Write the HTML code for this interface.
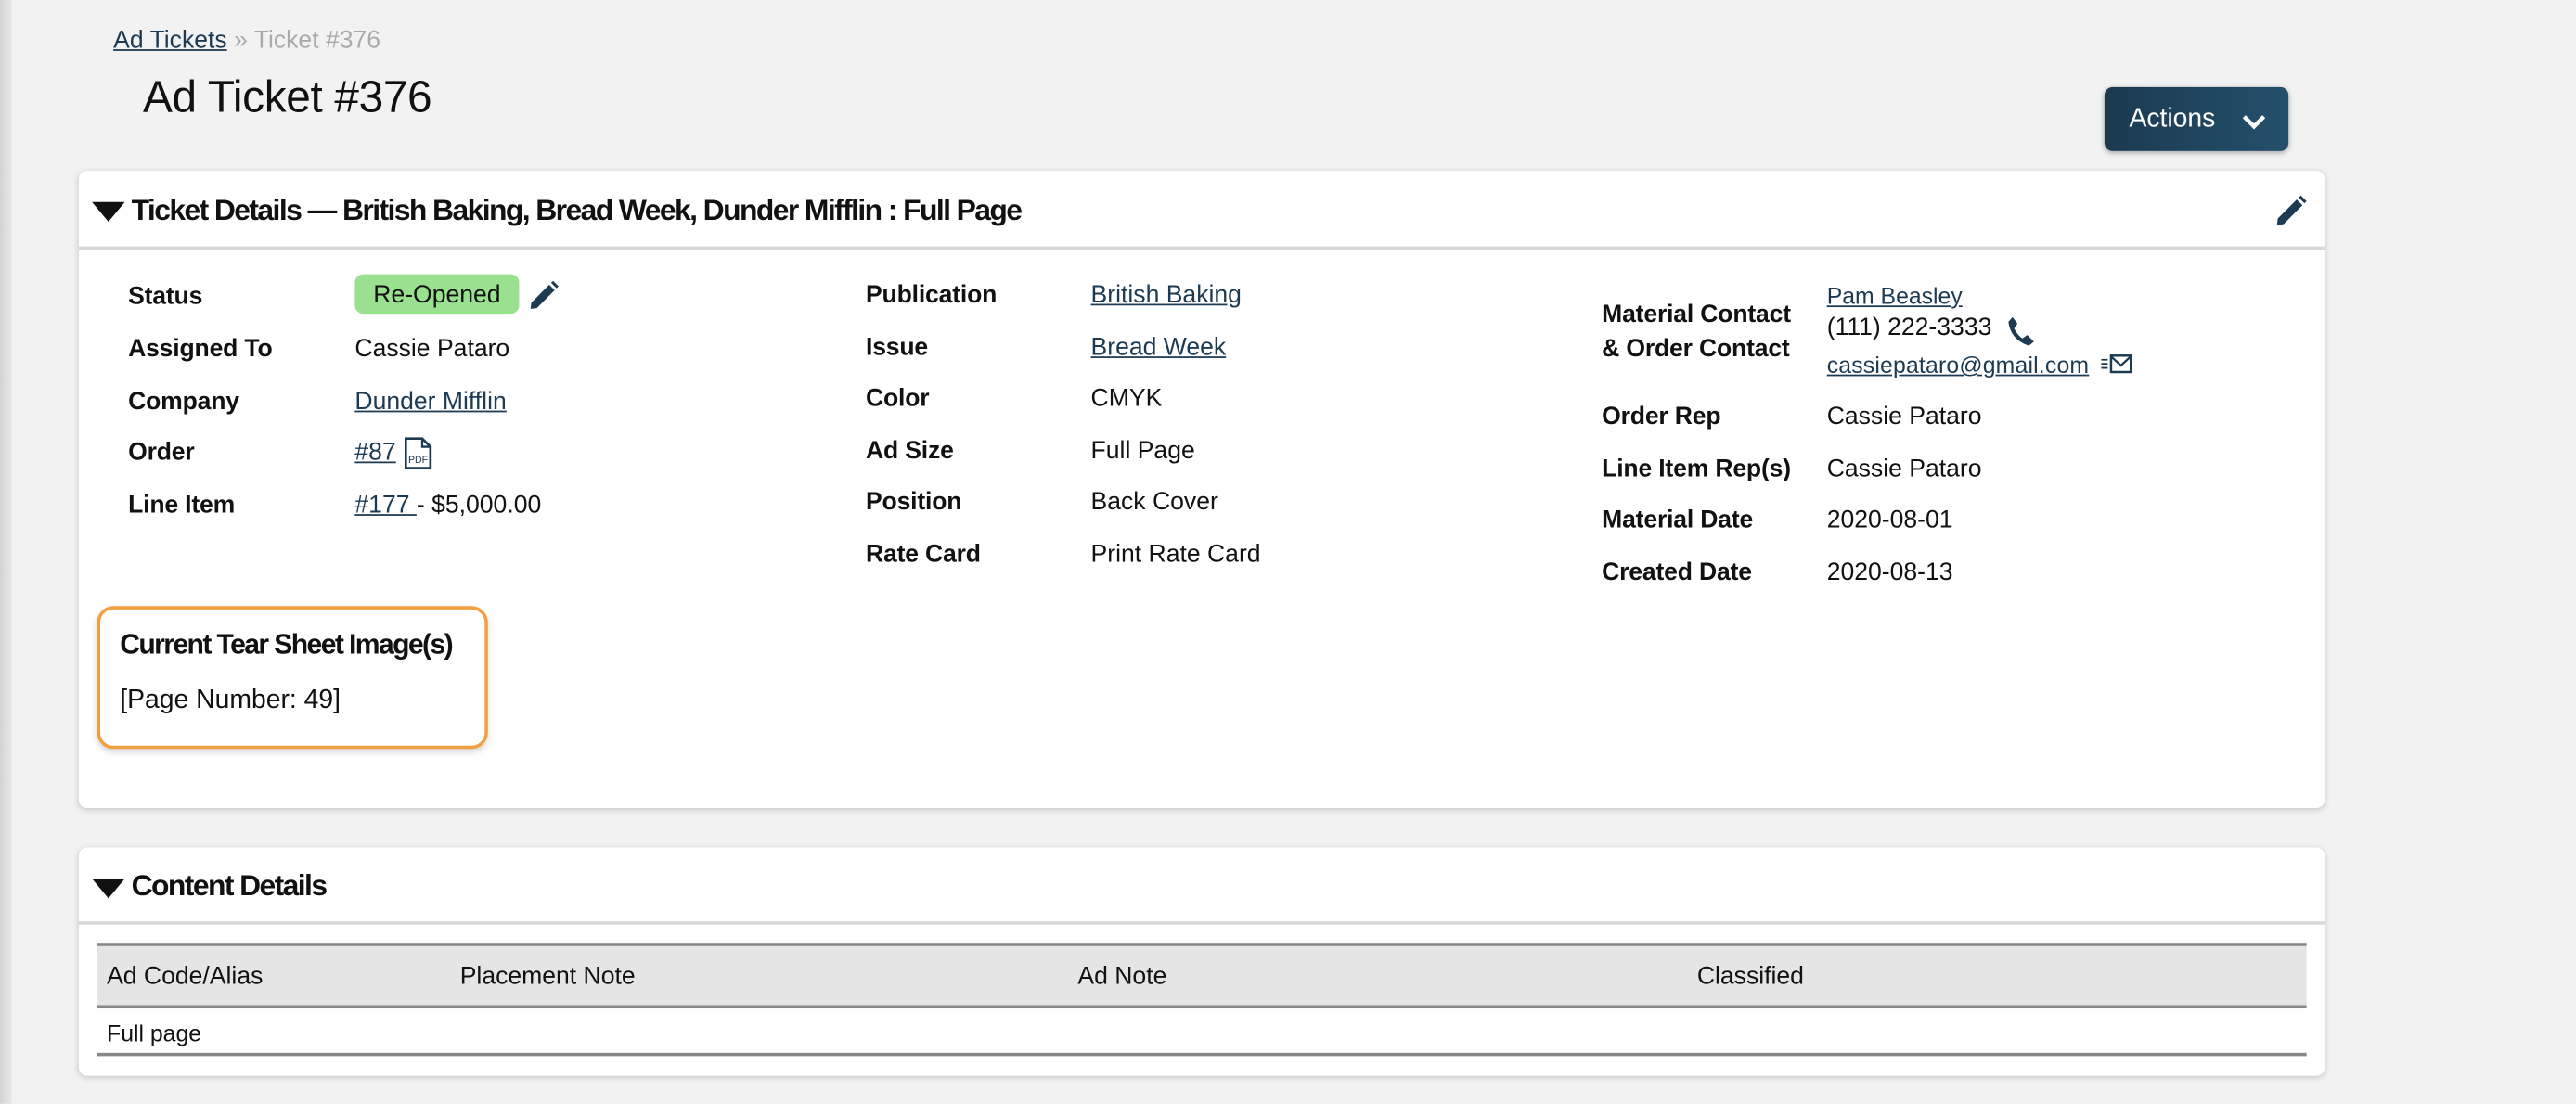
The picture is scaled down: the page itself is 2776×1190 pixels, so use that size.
<!DOCTYPE html>
<html><head><meta charset="utf-8">
<style>
html,body{margin:0;padding:0;}
body{width:2776px;height:1190px;overflow:hidden;background:#f2f2f2;font-family:"Liberation Sans",sans-serif;color:#111;}
#w{position:absolute;left:0;top:0;width:1568px;height:672px;transform:scale(1.77041);transform-origin:0 0;}
.strip{position:absolute;left:0;top:0;width:7px;height:672px;background:linear-gradient(90deg,#d4d4d4,#e8e8e8);}
.a{position:absolute;white-space:nowrap;}
a,.lk{color:#1c3a52;text-decoration:underline;}
.card{position:absolute;left:48px;width:1367px;background:#fff;border-radius:5px;box-shadow:0 1px 4px rgba(0,0,0,.18);}
.hd{position:absolute;left:0;right:0;top:0;border-bottom:2px solid #d8d8d8;}
.tri{position:absolute;left:8px;width:0;height:0;border-left:10px solid transparent;border-right:10px solid transparent;border-top:12px solid #111;}
.ht{font-size:18px;font-weight:bold;letter-spacing:-0.9px;}
.lb{font-size:15px;font-weight:bold;letter-spacing:-0.1px;}
.v{font-size:15px;}
#w .a.t{margin-top:1px;}
</style></head><body>
<div id="w">
<div class="strip"></div>
<div class="a" style="left:69px;top:16px;font-size:15px;"><span class="lk">Ad Tickets</span> <span style="color:#aaa">» Ticket #376</span></div>
<div class="a" style="left:87px;top:44px;font-size:27px;letter-spacing:-0.2px;">Ad Ticket #376</div>
<div class="a" style="left:1281px;top:53px;width:112px;height:39px;border-radius:5px;background:linear-gradient(90deg,#1b3a50,#24506c);box-shadow:0 1px 3px rgba(0,0,0,.3);color:#fff;font-size:16px;">
<span style="position:absolute;left:15px;top:11px;">Actions</span>
<svg style="position:absolute;left:83px;top:15px" width="16" height="12" viewBox="0 0 16 12"><path d="M2 3 L8 9 L14 3" stroke="#fff" stroke-width="2.5" fill="none"/></svg>
</div>

<div class="card" style="top:104px;height:388px;">
 <div class="hd" style="height:46px;"></div>
 <div class="tri" style="top:19px;"></div>
 <div class="a ht" style="left:32px;top:14px;">Ticket Details — British Baking, Bread Week, Dunder Mifflin : Full Page</div>
 <svg class="a" style="left:1337px;top:15px" width="19" height="19" viewBox="0 0 19 19"><path d="M1 18 L1.5 14 L13 2.5 L16.5 6 L5 17.5 Z" fill="#1c3a52"/><path d="M14.2 1.3 L15.5 0 L19 3.5 L17.7 4.8 Z" fill="#1c3a52"/></svg>
</div>
<div class="card" style="top:516px;height:139px;">
 <div class="hd" style="height:45px;"></div>
 <div class="tri" style="top:19px;"></div>
 <div class="a ht" style="left:32px;top:13px;">Content Details</div>
</div>

<!-- col1 -->
<div class="a lb t" style="left:78px;top:171px">Status</div>
<div class="a" style="left:216px;top:167px;width:100px;height:24px;background:#9ae18f;border-radius:5px;font-size:15px;line-height:25px;text-align:center;">Re-Opened</div>
<svg class="a" style="left:322px;top:171px" width="18" height="18" viewBox="0 0 19 19"><path d="M1 18 L1.5 14 L13 2.5 L16.5 6 L5 17.5 Z" fill="#1c3a52"/><path d="M14.2 1.3 L15.5 0 L19 3.5 L17.7 4.8 Z" fill="#1c3a52"/></svg>
<div class="a lb t" style="left:78px;top:203px">Assigned To</div><div class="a v t" style="left:216px;top:203px">Cassie Pataro</div>
<div class="a lb t" style="left:78px;top:235px">Company</div><div class="a v lk t" style="left:216px;top:235px">Dunder Mifflin</div>
<div class="a lb t" style="left:78px;top:266px">Order</div><div class="a v t" style="left:216px;top:266px"><span class="lk">#87 </span></div>
<svg class="a" style="left:246px;top:266px" width="17" height="20" viewBox="0 0 17 20"><path d="M1 1 H11 L16 6 V19 H1 Z" fill="#fff" stroke="#1c3a52" stroke-width="1.5"/><path d="M11 1 V6 H16" fill="none" stroke="#1c3a52" stroke-width="1.3"/><text x="2.5" y="16" font-size="6" font-family="Liberation Sans" fill="#1c3a52">PDF</text></svg>
<div class="a lb t" style="left:78px;top:298px">Line Item</div><div class="a v t" style="left:216px;top:298px"><span class="lk">#177 </span>- $5,000.00</div>
<!-- col2 -->
<div class="a lb t" style="left:527px;top:170px">Publication</div><div class="a v lk t" style="left:664px;top:170px">British Baking</div>
<div class="a lb t" style="left:527px;top:202px">Issue</div><div class="a v lk t" style="left:664px;top:202px">Bread Week</div>
<div class="a lb t" style="left:527px;top:233px">Color</div><div class="a v t" style="left:664px;top:233px">CMYK</div>
<div class="a lb t" style="left:527px;top:265px">Ad Size</div><div class="a v t" style="left:664px;top:265px">Full Page</div>
<div class="a lb t" style="left:527px;top:296px">Position</div><div class="a v t" style="left:664px;top:296px">Back Cover</div>
<div class="a lb t" style="left:527px;top:328px">Rate Card</div><div class="a v t" style="left:664px;top:328px">Print Rate Card</div>
<!-- col3 -->
<div class="a lb" style="left:975px;top:181px;line-height:21px">Material Contact<br>&amp; Order Contact</div>
<div class="a v lk" style="left:1112px;top:172px;font-size:14px">Pam Beasley</div>
<div class="a v" style="left:1112px;top:191px">(111) 222-3333</div>
<svg class="a" style="left:1221px;top:192px" width="18" height="19" viewBox="0 0 18 19"><path d="M4 1 L7 5 L5 8 Q7 12 10 14 L13 12 L17 16 L14 18.5 Q3 15 1.5 4 Z" fill="#1c3a52"/></svg>
<div class="a v lk" style="left:1112px;top:214px;font-size:14px;letter-spacing:0.1px">cassiepataro@gmail.com</div>
<svg class="a" style="left:1279px;top:215px" width="20" height="13" viewBox="0 0 20 13"><path d="M0 4h4M0 6.5h4M0 9h4" stroke="#1c3a52" stroke-width="1"/><rect x="6" y="1.5" width="12" height="10" fill="none" stroke="#1c3a52" stroke-width="1.4"/><path d="M6 2 L12 7.5 L18 2" fill="none" stroke="#1c3a52" stroke-width="1.3"/></svg>
<div class="a lb t" style="left:975px;top:244px">Order Rep</div><div class="a v t" style="left:1112px;top:244px">Cassie Pataro</div>
<div class="a lb t" style="left:975px;top:276px">Line Item Rep(s)</div><div class="a v t" style="left:1112px;top:276px">Cassie Pataro</div>
<div class="a lb t" style="left:975px;top:307px">Material Date</div><div class="a v t" style="left:1112px;top:307px">2020-08-01</div>
<div class="a lb t" style="left:975px;top:339px">Created Date</div><div class="a v t" style="left:1112px;top:339px">2020-08-13</div>

<!-- tear sheet -->
<div class="a" style="left:59px;top:369px;width:234px;height:83px;border:2px solid #f0a040;border-radius:10px;box-shadow:0 2px 4px rgba(0,0,0,.15);background:#fff;"></div>
<div class="a" style="left:73px;top:383px;font-size:17px;font-weight:bold;letter-spacing:-0.9px;">Current Tear Sheet Image(s)</div>
<div class="a" style="left:73px;top:418px;font-size:16px;">[Page Number: 49]</div>

<!-- table -->
<div class="a" style="left:59px;top:574px;width:1345px;height:36px;background:#e5e5e5;border-top:2px solid #888;border-bottom:2px solid #888;"></div>
<div class="a v" style="left:65px;top:586px">Ad Code/Alias</div>
<div class="a v" style="left:280px;top:586px">Placement Note</div>
<div class="a v" style="left:656px;top:586px">Ad Note</div>
<div class="a v" style="left:1033px;top:586px">Classified</div>
<div class="a" style="left:65px;top:621px;font-size:14px">Full page</div>
<div class="a" style="left:59px;top:641px;width:1345px;height:2px;background:#888;"></div>
</div>
</body></html>
